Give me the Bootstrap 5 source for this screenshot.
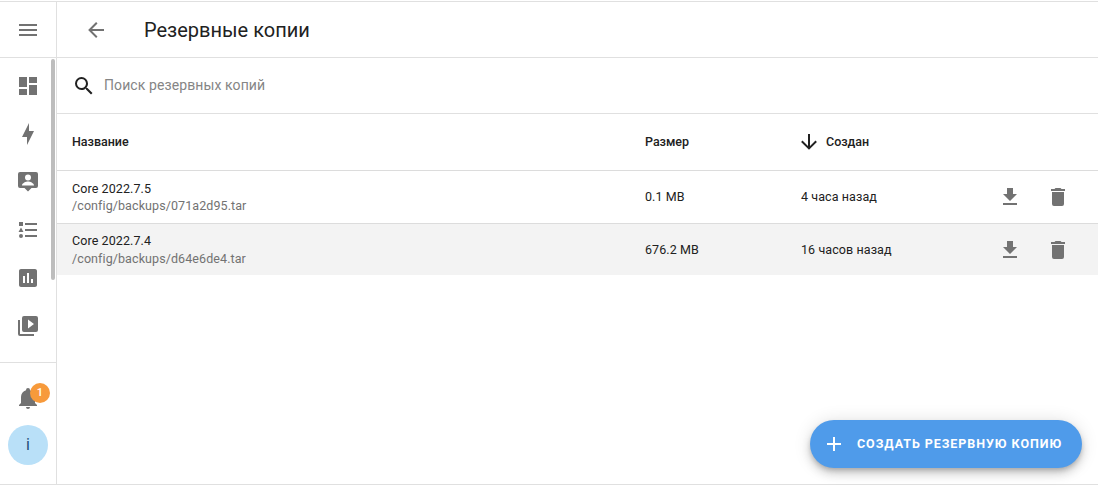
<!DOCTYPE html>
<html lang="ru">
<head>
  <meta charset="utf-8">
  <title>Резервные копии</title>
  <meta name="viewport" content="width=device-width, initial-scale=1">
  <link href="https://cdn.jsdelivr.net/npm/bootstrap@5.3.2/dist/css/bootstrap.min.css" rel="stylesheet">
  <style>
    html, body { height: 100%; overflow: hidden; }
    body { font-family: Roboto, "Noto Sans", sans-serif; color: #212121; background: #fff; }
    svg { display: block; fill: currentColor; }

    .ha-frame { height: 482px; margin-top: 1px; border-top: 1px solid #e0e0e0; border-bottom: 1px solid #e0e0e0; box-sizing: content-box; }
    .ha-side { width: 57px; border-right: 1px solid #e0e0e0; color: #727272; }
    .ha-burger { height: 55px; border-bottom: 1px solid #e0e0e0; box-sizing: content-box; }
    .ha-items { height: 305px; padding-top: 4px; border-bottom: 1px solid #e0e0e0; }
    .ha-item { height: 48px; }
    .ha-scroll { top: 57px; right: 1px; width: 4px; height: 221px; background: #bdbdbd; border-radius: 2px; }
    .ha-bell { height: 48px; margin-top: 11px; }
    .ha-count { top: 9px; left: 30px; width: 20px; height: 20px; background: #f79a3b; color: #fff; font-size: 11px; font-weight: 500; }
    .ha-avatar { width: 40px; height: 40px; margin: 3px auto 0; background: #b9e0f8; color: #1f4e79; font-size: 16px; }

    .ha-top { height: 55px; border-bottom: 1px solid #e0e0e0; box-sizing: content-box; }
    .ha-back { width: 48px; height: 55px; margin-left: 15px; color: #727272; }
    .ha-title { font-size: 20px; margin-left: 24px; }
    .ha-search { height: 55px; border-bottom: 1px solid #e0e0e0; box-sizing: content-box; padding-left: 15px; color: #212121; }
    .ha-search span { color: #858585; font-size: 14px; margin-left: 8px; letter-spacing: .1px; }

    .ha-table { table-layout: fixed; width: 100%; font-size: 12.5px; letter-spacing: .09px; margin: 0; }
    .ha-table th, .ha-table td { padding: 0 0 0 16px; vertical-align: middle; border-bottom: 1px solid #dcdcdc; background: transparent; color: #212121; box-shadow: none; }
    .ha-table th:first-child, .ha-table td:first-child { padding-left: 15px; }
    .ha-table th { height: 56px; font-weight: 500; letter-spacing: -.02px; }
    .ha-cap { position: relative; top: 1px; }
    .ha-table td { height: 53px; line-height: 17px; }
    .ha-table tr.ha-sel td { background: #f3f3f3; height: 52px; border-bottom: 0; line-height: 18px; padding-top: 2px; }
    .ha-path { color: #727272; }
    .ha-act { width: 48px; height: 48px; color: #727272; border: 0; background: none; padding: 0; }
    .ha-sel .ha-act { margin-top: 1px; }
    .ha-sort { margin-left: -4px; margin-right: 5px; }

    .ha-fab { right: 16px; bottom: 16px; height: 48px; width: 272px; background: #4f9bea; color: #fff; border: 0; border-radius: 24px; font-size: 12.5px; font-weight: 700; letter-spacing: .93px; box-shadow: 0 3px 5px -1px rgba(0,0,0,.2), 0 6px 10px 0 rgba(0,0,0,.14), 0 1px 18px 0 rgba(0,0,0,.12); padding: 0 0 0 12px; }
    .ha-fab:hover { background: #4f9bea; color: #fff; }
    .ha-fab span { margin-left: 3px; }
  </style>
</head>
<body>

<div class="ha-frame d-flex position-relative">
  <aside class="ha-side flex-shrink-0 position-relative">
    <div class="ha-burger d-flex align-items-center justify-content-center">
      <svg width="24" height="24" viewBox="0 0 24 24"><path d="M3,6H21V8H3V6M3,11H21V13H3V11M3,16H21V18H3V16Z"/></svg>
    </div>
    <div class="ha-items">
      <div class="ha-item d-flex align-items-center justify-content-center"><svg width="24" height="24" viewBox="0 0 24 24"><path d="M13,3V9H21V3M13,21H21V11H13M3,21H11V15H3M3,13H11V3H3V13Z"/></svg></div>
      <div class="ha-item d-flex align-items-center justify-content-center"><svg width="24" height="24" viewBox="0 0 24 24"><path d="M11 15H6L13 1V9H18L11 23V15Z"/></svg></div>
      <div class="ha-item d-flex align-items-center justify-content-center"><svg width="24" height="24" viewBox="0 0 24 24"><path fill-rule="evenodd" d="M4 2H20A2 2 0 0 1 22 4V16A2 2 0 0 1 20 18H15.500L12 21.500L8.500 18H4A2 2 0 0 1 2 16V4A2 2 0 0 1 4 2ZM12 4.500A3 3 0 0 0 12 10.500A3 3 0 0 0 12 4.500ZM6 15.500H18C18 13 14 11.500 12 11.500C10 11.500 6 13 6 15.500Z"/></svg></div>
      <div class="ha-item d-flex align-items-center justify-content-center"><svg width="24" height="24" viewBox="0 0 24 24"><path d="M5,9.500L7.500,14H2.500L5,9.500M3,4H7V8H3V4M5,20A2,2 0 0,0 7,18A2,2 0 0,0 5,16A2,2 0 0,0 3,18A2,2 0 0,0 5,20M9,5V7H21V5H9M9,19H21V17H9V19M9,13H21V11H9V13Z"/></svg></div>
      <div class="ha-item d-flex align-items-center justify-content-center"><svg width="24" height="24" viewBox="0 0 24 24"><path d="M19 3H5C3.900 3 3 3.900 3 5V19C3 20.100 3.900 21 5 21H19C20.100 21 21 20.100 21 19V5C21 3.900 20.100 3 19 3M9 17H7V10H9V17M13 17H11V7H13V17M17 17H15V13H17V17Z"/></svg></div>
      <div class="ha-item d-flex align-items-center justify-content-center"><svg width="24" height="24" viewBox="0 0 24 24"><path d="M4,6H2V20A2,2 0 0,0 4,22H18V20H4V6M20,2H8A2,2 0 0,0 6,4V16A2,2 0 0,0 8,18H20A2,2 0 0,0 22,16V4A2,2 0 0,0 20,2M12,14.500V5.500L18,10L12,14.500Z"/></svg></div>
    </div>
    <div class="ha-bell position-relative d-flex align-items-center justify-content-center">
      <svg width="24" height="24" viewBox="0 0 24 24"><path d="M21,19V20H3V19L5,17V11C5,7.900 7.030,5.170 10,4.290C10,4.190 10,4.100 10,4A2,2 0 0,1 12,2A2,2 0 0,1 14,4C14,4.100 14,4.190 14,4.290C16.970,5.170 19,7.900 19,11V17L21,19M14,21A2,2 0 0,1 12,23A2,2 0 0,1 10,21"/></svg>
      <span class="ha-count position-absolute rounded-circle d-flex align-items-center justify-content-center">1</span>
    </div>
    <div class="ha-avatar rounded-circle d-flex align-items-center justify-content-center">i</div>
    <div class="ha-scroll position-absolute"></div>
  </aside>

  <main class="flex-grow-1 position-relative">
    <header class="ha-top d-flex align-items-center">
      <div class="ha-back d-flex align-items-center justify-content-center">
        <svg width="24" height="24" viewBox="0 0 24 24"><path d="M20,11V13H8L13.500,18.500L12.080,19.920L4.160,12L12.080,4.080L13.500,5.500L8,11H20Z"/></svg>
      </div>
      <div class="ha-title">Резервные копии</div>
    </header>

    <div class="ha-search d-flex align-items-center">
      <svg width="24" height="24" viewBox="0 0 24 24"><path d="M9.500,3A6.500,6.500 0 0,1 16,9.500C16,11.110 15.410,12.590 14.440,13.730L14.710,14H15.500L20.500,19L19,20.500L14,15.500V14.710L13.730,14.440C12.590,15.410 11.110,16 9.500,16A6.500,6.500 0 0,1 3,9.500A6.500,6.500 0 0,1 9.500,3M9.500,5C7,5 5,7 5,9.500C5,12 7,14 9.500,14C12,14 14,12 14,9.500C14,7 12,5 9.500,5Z"/></svg>
      <span>Поиск резервных копий</span>
    </div>

    <table class="table ha-table">
      <colgroup>
        <col style="width:572px"><col style="width:156px"><col><col style="width:48px"><col style="width:64px">
      </colgroup>
      <thead>
        <tr>
          <th><span class="ha-cap">Название</span></th>
          <th><span class="ha-cap">Размер</span></th>
          <th>
            <div class="d-flex align-items-center">
              <svg width="24" height="24" viewBox="0 0 24 24" class="ha-sort flex-shrink-0"><path d="M11,4H13V16L18.500,10.500L19.920,11.920L12,19.840L4.080,11.920L5.500,10.500L11,16V4Z"/></svg>
              <span class="ha-cap">Создан</span>
            </div>
          </th>
          <th></th>
          <th></th>
        </tr>
      </thead>
      <tbody>
        <tr>
          <td>Core 2022.7.5<br><span class="ha-path">/config/backups/071a2d95.tar</span></td>
          <td>0.1 MB</td>
          <td>4 часа назад</td>
          <td class="p-0"><button class="ha-act d-flex align-items-center justify-content-center" type="button"><svg width="24" height="24" viewBox="0 0 24 24"><path d="M5,20H19V18H5M19,9H15V3H9V9H5L12,16L19,9Z"/></svg></button></td>
          <td class="p-0"><button class="ha-act d-flex align-items-center justify-content-center" type="button"><svg width="24" height="24" viewBox="0 0 24 24"><path d="M19,4H15.500L14.500,3H9.500L8.500,4H5V6H19M6,19A2,2 0 0,0 8,21H16A2,2 0 0,0 18,19V7H6V19Z"/></svg></button></td>
        </tr>
        <tr class="ha-sel">
          <td>Core 2022.7.4<br><span class="ha-path">/config/backups/d64e6de4.tar</span></td>
          <td>676.2 MB</td>
          <td>16 часов назад</td>
          <td class="p-0"><button class="ha-act d-flex align-items-center justify-content-center" type="button"><svg width="24" height="24" viewBox="0 0 24 24"><path d="M5,20H19V18H5M19,9H15V3H9V9H5L12,16L19,9Z"/></svg></button></td>
          <td class="p-0"><button class="ha-act d-flex align-items-center justify-content-center" type="button"><svg width="24" height="24" viewBox="0 0 24 24"><path d="M19,4H15.500L14.500,3H9.500L8.500,4H5V6H19M6,19A2,2 0 0,0 8,21H16A2,2 0 0,0 18,19V7H6V19Z"/></svg></button></td>
        </tr>
      </tbody>
    </table>

    <button class="ha-fab btn position-absolute d-flex align-items-center gap-2" type="button">
      <svg width="24" height="24" viewBox="0 0 24 24"><path d="M19,13H13V19H11V13H5V11H11V5H13V11H19V13Z"/></svg>
      <span>СОЗДАТЬ РЕЗЕРВНУЮ КОПИЮ</span>
    </button>
  </main>
</div>

</body>
</html>
